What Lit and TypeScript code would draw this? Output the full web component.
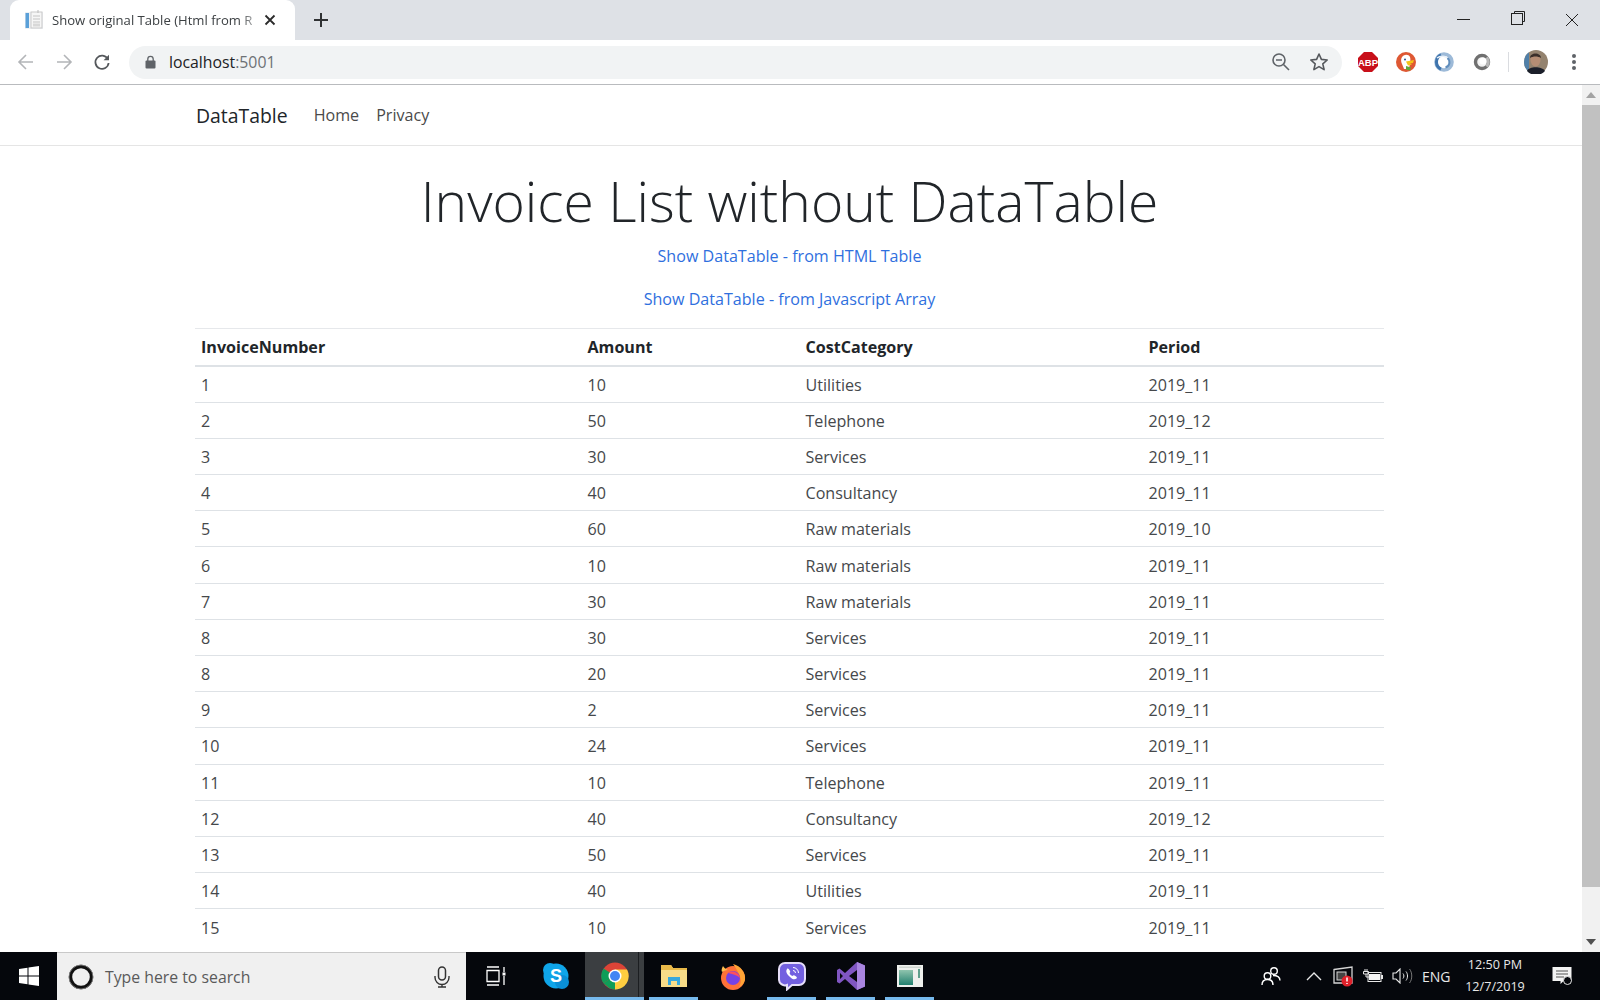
import { LitElement, html, css, svg } from "lit";
import { customElement } from "lit/decorators.js";

const rows: [string, string, string, string][] = [
  ["1", "10", "Utilities", "2019_11"],
  ["2", "50", "Telephone", "2019_12"],
  ["3", "30", "Services", "2019_11"],
  ["4", "40", "Consultancy", "2019_11"],
  ["5", "60", "Raw materials", "2019_10"],
  ["6", "10", "Raw materials", "2019_11"],
  ["7", "30", "Raw materials", "2019_11"],
  ["8", "30", "Services", "2019_11"],
  ["8", "20", "Services", "2019_11"],
  ["9", "2", "Services", "2019_11"],
  ["10", "24", "Services", "2019_11"],
  ["11", "10", "Telephone", "2019_11"],
  ["12", "40", "Consultancy", "2019_12"],
  ["13", "50", "Services", "2019_11"],
  ["14", "40", "Utilities", "2019_11"],
  ["15", "10", "Services", "2019_11"],
];

const ic = (w: number, h: number, body: unknown) =>
  html`<svg width=${w} height=${h} viewBox="0 0 ${w} ${h}" fill="none">${body}</svg>`;

@customElement("app-root")
export class AppRoot extends LitElement {
  static styles = css`
    :host { display: block; width: 1600px; height: 1000px; overflow: hidden; background: #fff;
      font-family: "Open Sans", "Noto Sans", sans-serif; color: #212529; }
    svg { display: block; flex: none; }
    .shell { display: flex; flex-direction: column; height: 1000px; }

    .tabstrip { height: 40px; background: #dee1e6; display: flex; align-items: flex-end; flex: none; }
    .tab { margin-left: 10px; width: 285px; height: 40px; background: #fff; border-radius: 9px 9px 0 0;
      display: flex; align-items: center; padding-left: 15px; box-sizing: border-box; position: relative; }
    .tab-title { margin-left: 9px; width: 208px; font-size: 13.1px; color: #3c4043; white-space: nowrap;
      -webkit-mask-image: linear-gradient(90deg, #000 90%, rgba(0,0,0,.2) 100%); mask-image: linear-gradient(90deg, #000 90%, rgba(0,0,0,.2) 100%); }
    .tab-close { margin-left: 4px; }
    .newtab { margin-left: 18px; align-self: center; }
    .winctl { margin-left: auto; display: flex; align-items: center; align-self: stretch; padding-right: 21px; gap: 40px; }

    .toolbar { height: 44px; background: #fff; border-bottom: 1px solid #b9bbbe; display: flex; align-items: center; flex: none; padding-left: 16px; }
    .navbtns { display: flex; align-items: center; gap: 18px; }
    .omni { margin-left: 17px; width: 1213px; height: 33px; border-radius: 17px; background: #f1f3f4; display: flex; align-items: center; padding: 0 13px 0 16px; box-sizing: border-box; }
    .url { margin-left: 13px; font-size: 15.8px; color: #202124; }
    .url span { color: #6d7175; }
    .omni-end { margin-left: auto; display: flex; gap: 18px; align-items: center; }
    .exts { margin-left: 16px; display: flex; align-items: center; gap: 18px; }
    .divider { width: 1px; height: 20px; background: #dadce0; margin: 0 -3px 0 -2px; }
    .menu { margin-left: 0; }

    .view { flex: 1; display: flex; min-height: 0; }
    .page { flex: 1; min-width: 0; overflow: hidden; }
    .navbar { height: 60px; border-bottom: 1px solid #e5e5e5; display: flex; align-items: center; padding-left: 196px; }
    .brand { font-size: 19.4px; color: #212529; }
    .navlinks { display: flex; gap: 17px; margin-left: 26px; font-size: 16.1px; color: #4a4a4a; }
    .main { padding-left: 195px; width: 1189px; }
    h1 { margin: 17px 0 0; height: 76px; line-height: 76px; font-size: 55.2px; font-weight: 300; text-align: center; color: #212529; white-space: nowrap; }
    .link { text-align: center; font-size: 16.1px; color: #2f6fde; height: 24px; line-height: 24px; }
    .l1 { margin-top: 5px; }
    .l2 { margin-top: 19px; }
    table { margin-top: 17px; width: 1189px; border-collapse: collapse; table-layout: fixed; font-size: 16.1px; }
    .c1 { width: 386.5px; } .c2 { width: 218px; } .c3 { width: 343px; } .c4 { width: 241.5px; }
    th { text-align: left; font-weight: 700; color: #212529; padding: 0 6px; height: 37.5px; border-top: 1px solid #e6e8eb; border-bottom: 2px solid #dee2e6; box-sizing: border-box; }
    td { padding: 1px 6px 0; height: 36.2px; color: #45484b; border-bottom: 1px solid #dee2e6; box-sizing: border-box; }
    tr:last-child td { border-bottom: none; }

    .scrollbar { width: 18px; background: #f1f1f1; display: flex; flex-direction: column; flex: none; }
    .arrow { height: 20px; display: flex; align-items: center; justify-content: center; flex: none; }
    .thumb { height: 782px; background: #c1c1c1; flex: none; }
    .track { flex: 1; }

    .taskbar { height: 48px; background: #05070c; display: flex; align-items: center; flex: none; }
    .start { width: 57px; display: flex; justify-content: center; }
    .search { width: 409px; height: 48px; background: #f0f0f0; border-top: 1px solid #c9c9c9; box-sizing: border-box; display: flex; align-items: center; padding-left: 11px; }
    .search-text { margin-left: 11px; font-size: 15.8px; color: #5a5a5a; }
    .mic { margin-left: auto; margin-right: 16px; }
    .apps { display: flex; align-items: stretch; height: 48px; }
    .app { width: 59px; display: flex; align-items: center; justify-content: center; position: relative; }
    .app.tv { width: 60px; }
    .app.active::after { content: ""; position: absolute; left: 5px; right: 5px; bottom: 0; height: 3px; background: #76b9ed; }
    .app.cur { background: #3b3e41; }
    .app.cur::after { left: 0; right: 0; }
    .app.cur::before { content: ""; position: absolute; right: 5px; top: 0; bottom: 0; width: 1px; background: #1c1e21; }
    .tray { margin-left: auto; display: flex; align-items: center; height: 48px; color: #fff; }
    .sp22 { width: 25px; } .sp13 { width: 11px; } .sp8 { width: 9px; }
    .eng { font-size: 14px; margin-left: 9px; width: 31px; color: #e8e8e8; }
    .clock { width: 78px; text-align: center; font-size: 12.6px; line-height: 22px; color: #e8e8e8; margin-left: 3px; }
    .notif { margin-left: 18px; margin-right: 27px; }
  `;

  private favicon() {
    return ic(18, 20, svg`
      <rect x="0" y="2" width="18" height="17" fill="#eef1f4"/>
      <rect x="0.5" y="3" width="3.5" height="15" fill="#5aa0d8"/>
      <rect x="6" y="2" width="11" height="16" fill="#f6f6f6" stroke="#c9c9c9"/>
      <path d="M8 6h7M8 9h7M8 12h7" stroke="#c4c4c4"/>
      <rect x="8" y="13.5" width="7" height="3" fill="#d8d8d8"/>
      <path d="M13 0v3" stroke="#bbb"/>`);
  }

  private chrome() {
    return html`
      <div class="tabstrip">
        <div class="tab">
          ${this.favicon()}
          <div class="tab-title">Show original Table (Html from R</div>
          <div class="tab-close">${ic(12, 12, svg`<path d="M1.5 1.5l9 9M10.5 1.5l-9 9" stroke="#2b2b2b" stroke-width="1.8"/>`)}</div>
        </div>
        <div class="newtab">${ic(16, 16, svg`<path d="M8 1v14M1 8h14" stroke="#2f3133" stroke-width="2"/>`)}</div>
        <div class="winctl">
          ${ic(14, 34, svg`<path d="M0 16.5h13" stroke="#222" stroke-width="1"/>`)}
          ${ic(14, 34, svg`<path d="M3.5 10.5v-2h10v10h-2" stroke="#222"/><rect x="0.5" y="10.5" width="11" height="11" stroke="#222"/>`)}
          ${ic(14, 34, svg`<path d="M1 11l12 12M13 11L1 23" stroke="#222"/>`)}
        </div>
      </div>
      <div class="toolbar">
        <div class="navbtns">
          ${ic(20, 20, svg`<path d="M17 10H3M10 3l-7 7 7 7" stroke="#b3b5b8" stroke-width="1.6"/>`)}
          ${ic(20, 20, svg`<path d="M3 10h14M10 3l7 7-7 7" stroke="#b3b5b8" stroke-width="1.6"/>`)}
          ${ic(20, 20, svg`<path d="M15.8 7A6.6 6.6 0 1 0 16.6 11" stroke="#55585c" stroke-width="1.8"/><path d="M17 2.8v5.4h-5.4z" fill="#55585c"/>`)}
        </div>
        <div class="omni">
          ${ic(11, 14, svg`<rect x="0.5" y="5.5" width="10" height="8" rx="1" fill="#5f6368"/><path d="M2.8 6V4a2.7 2.7 0 0 1 5.400 0v2" stroke="#5f6368" stroke-width="1.300"/>`)}
          <div class="url">localhost<span>:5001</span></div>
          <div class="omni-end">
            ${ic(20, 20, svg`<circle cx="8" cy="8" r="6" stroke="#5f6368" stroke-width="1.6"/><path d="M5 8h6M12.500 12.500l5.500 5.500" stroke="#5f6368" stroke-width="1.6"/>`)}
            ${ic(20, 20, svg`<path d="M10 2l2.400 5.400 5.800.6-4.400 3.900 1.300 5.700L10 14.600l-5.100 3 1.300-5.700L1.800 8l5.800-.6z" stroke="#55585c" stroke-width="1.6" stroke-linejoin="round"/>`)}
          </div>
        </div>
        <div class="exts">
          ${ic(20, 20, svg`<path d="M6 0h8l6 6v8l-6 6H6l-6-6V6z" fill="#c8101a"/><text x="10" y="13.500" text-anchor="middle" font-family="Liberation Sans" font-weight="700" font-size="9.500" fill="#fff">ABP</text>`)}
          ${ic(20, 20, svg`<circle cx="10" cy="10" r="10" fill="#de5833"/><path d="M5.500 6c2-4 7-4 8.500-1 1 3 0 6-1 12H8C7 13 4 10 5.500 6z" fill="#fff"/><path d="M10 9.500l8-1.500-1 3-3 .5 2 1-4 1z" fill="#f5c518"/><path d="M10 14l5 1.500-1 3-4-1z" fill="#5fa83a"/><circle cx="9" cy="7.500" r="1" fill="#2d4f8e"/>`)}
          ${ic(20, 20, svg`<circle cx="10" cy="10" r="8" stroke="#9dbad8" stroke-width="3.600"/><path d="M7 2.800A8 8 0 0 0 7 17.200" stroke="#3f74ad" stroke-width="3"/><path d="M3 6c4-3 10-2 12 2" stroke="#e8f0f8" stroke-width="1.500"/><path d="M13.500 6a5.500 5.500 0 0 1-2 9.500" stroke="#5f8dbc" stroke-width="2"/>`)}
          ${ic(20, 20, svg`<circle cx="10" cy="10" r="6.500" fill="#f2f2f2" stroke="#707070" stroke-width="3.400"/><path d="M14.500 5.500a6.500 6.500 0 0 1 0 9" stroke="#b8b8b8" stroke-width="3"/><circle cx="11" cy="9" r="3.500" fill="#fff"/>`)}
          <div class="divider"></div>
          ${ic(24, 24, svg`<circle cx="12" cy="12" r="12" fill="#94836f"/><path d="M0 12a12 12 0 0 0 5 9.700V2.300A12 12 0 0 0 0 12z" fill="#4f7fa8"/><ellipse cx="11.500" cy="10" rx="5" ry="6.500" fill="#b58d74"/><path d="M6 8c0-6 11-6 11 0-3-2-8-2-11 0z" fill="#3a2f2a"/><path d="M3 21c2-5 15-5 18 0a12 12 0 0 1-18 0z" fill="#1b1f2a"/>`)}
          <div class="menu">${ic(16, 20, svg`<circle cx="8" cy="4" r="2" fill="#5f6368"/><circle cx="8" cy="10" r="2" fill="#5f6368"/><circle cx="8" cy="16" r="2" fill="#5f6368"/>`)}</div>
        </div>
      </div>`;
  }

  private taskbar() {
    return html`
      <div class="taskbar">
        <div class="start">${ic(20, 20, svg`<path d="M0 3l8.500-1.200v7.600H0zM9.500 1.600L20 0v9.400H9.500zM0 10.600h8.500v7.600L0 17zM9.500 10.600H20V20L9.500 18.400z" fill="#fff"/>`)}</div>
        <div class="search">
          ${ic(26, 26, svg`<circle cx="13" cy="13" r="10.500" stroke="#111" stroke-width="3.400"/><circle cx="13" cy="13" r="12" stroke="#888" stroke-width="0.800"/>`)}
          <div class="search-text">Type here to search</div>
          <div class="mic">${ic(16, 22, svg`<rect x="4.500" y="1" width="7" height="13" rx="3.500" stroke="#333" stroke-width="1.500"/><path d="M1 10v1.500a7 7 0 0 0 14 0V10M8 18.500V21M4 21h8" stroke="#333" stroke-width="1.400"/>`)}</div>
        </div>
        <div class="apps">
          <div class="app tv">${ic(20, 22, svg`<path d="M1 2h12M1 20h12M1 5.500h12v11H1z" stroke="#fff" stroke-width="1.300"/><path d="M18 2v5M18 11v9" stroke="#fff" stroke-width="1.300"/><rect x="16.500" y="7.500" width="3" height="3" fill="#fff"/>`)}</div>
          <div class="app">${ic(28, 28, svg`<circle cx="14" cy="14" r="12.500" fill="#0fa5e9"/><circle cx="8" cy="8" r="7" fill="#0fa5e9"/><circle cx="20" cy="20" r="7" fill="#0a8fd6"/><text x="14" y="20" text-anchor="middle" font-family="Liberation Sans" font-weight="700" font-size="18" fill="#fff">S</text>`)}</div>
          <div class="app cur active">${ic(28, 28, svg`<circle cx="14" cy="14" r="13.500" fill="#db4437"/><path d="M14 14L2.300 21A13.500 13.500 0 0 1 2.600 6.500z" fill="#0f9d58"/><path d="M14 14h13.500A13.500 13.500 0 0 1 8 26.100L2.300 21z" fill="#0f9d58"/><path d="M14 7.500h12A13.500 13.500 0 0 1 14 27.500z" fill="#ffcd40"/><circle cx="14" cy="14" r="6.500" fill="#fff"/><circle cx="14" cy="14" r="5" fill="#4285f4"/>`)}</div>
          <div class="app active">${ic(28, 26, svg`<path d="M1 2h10l2 3h14v19H1z" fill="#f8dc88"/><path d="M1 2h10l2 3h14v2H1z" fill="#e9b949"/><path d="M8 22v-8h12v8h-3v-4h-6v4z" fill="#38a8dc"/>`)}</div>
          <div class="app">${ic(28, 28, svg`<circle cx="14" cy="16" r="12" fill="#ff7139"/><path d="M14 2c8 2 13 9 12 16-1 3-3 6-6 7 4-6 1-13-6-23z" fill="#ffa436"/><circle cx="14" cy="16" r="7" fill="#7542e5"/><path d="M3 10c-1-2 0-4 1-6 1 2 3 3 5 4-3 0-4 1-6 2z" fill="#ffbd4f"/><path d="M9 11c4-3 11-1 12 5-3-3-8-4-12-5z" fill="#ff4f5e"/>`)}</div>
          <div class="app active">${ic(28, 30, svg`<path d="M7 2h14a6 6 0 0 1 6 6v10a6 6 0 0 1-6 6h-7l-5 4.500V24A6 6 0 0 1 1 18V8a6 6 0 0 1 6-6z" fill="#7360e0" stroke="#e6def9" stroke-width="2"/><path d="M9 8c1-1 2 0 3 2 .500 1 0 1.500-.5 2 .5 1.500 1.500 2.500 3 3 .5-.5 1-1 2-.5 2 1 3 2 2 3-2 1.500-4 1-7-2s-4-5-2.500-7.500z" fill="#fff"/><path d="M15 6.500a5.500 5.500 0 0 1 5.500 5.500M15 9.500a2.500 2.500 0 0 1 2.500 2.500" stroke="#fff" stroke-width="1"/>`)}</div>
          <div class="app active">${ic(30, 30, svg`<path fill-rule="evenodd" d="M21 1l8 3.500v21L21 29 9 18l-5.500 4.500L1 21V9l2.500-1.500L9 12zM21 9v12l-8-6zM4 12v6l3-3z" fill="#8056c2"/><path d="M21 1l8 3.500v21L21 29z" fill="#a985e0"/>`)}</div>
          <div class="app active">${ic(26, 22, svg`<defs><linearGradient id="pane" x1="0" y1="0" x2="0" y2="1"><stop offset="0" stop-color="#8fc4ae"/><stop offset="1" stop-color="#23806f"/></linearGradient></defs><rect width="26" height="22" fill="#eef0ed"/><rect x="2" y="5" width="14" height="15" fill="url(#pane)"/><rect x="21" y="4" width="2" height="9" fill="#5f9f8c"/><rect x="2" y="1.500" width="22" height="1.500" fill="#cfd5d0"/>`)}</div>
        </div>
        <div class="tray">
          ${ic(20, 22, svg`<circle cx="13" cy="6" r="3.300" stroke="#fff" stroke-width="1.400"/><circle cx="6.500" cy="11" r="3.300" stroke="#fff" stroke-width="1.400"/><path d="M1 20c0-4 2-5.500 5.500-5.500S12 16 12 20M12 10.500c4 0 7 1 7 5" stroke="#fff" stroke-width="1.400"/>`)}
          <div class="sp22"></div>
          ${ic(16, 10, svg`<path d="M1 9l7-7 7 7" stroke="#e8e8e8" stroke-width="1.400"/>`)}
          <div class="sp13"></div>
          ${ic(21, 21, svg`<path d="M1 3.500L19 1v16H1z" stroke="#d5d5d5" stroke-width="1.300"/><rect x="4" y="6" width="9" height="8" fill="#444" stroke="#d5d5d5"/><circle cx="14" cy="15" r="5.500" fill="#e0212b"/><path d="M14 11.500v4M14 17v1" stroke="#fff" stroke-width="1.500"/>`)}
          <div class="sp8"></div>
          ${ic(20, 14, svg`<rect x="5" y="3.500" width="13" height="9" stroke="#e8e8e8"/><rect x="6" y="5" width="11" height="6" fill="#f4f4f4"/><rect x="18" y="6" width="2" height="4" fill="#e8e8e8"/><path d="M2 0v2M4 0v2M0.500 2.500h5v2.500H.5zM3 5v3h3" stroke="#e8e8e8"/>`)}
          <div class="sp8"></div>
          ${ic(21, 16, svg`<path d="M1 5h3l4-4v14l-4-4H1z" stroke="#e8e8e8" stroke-width="1.100"/><path d="M11 5.500c1.200 1.500 1.200 3.500 0 5M14 3.500c2 2.500 2 6.500 0 9" stroke="#e8e8e8"/><path d="M17.500 1c3 3.500 3 10.500 0 14" stroke="#777"/>`)}
          <div class="eng">ENG</div>
          <div class="clock">12:50 PM<br />12/7/2019</div>
          <div class="notif">${ic(21, 20, svg`<path d="M0.500 1h19v14h-8l-3 3v-3h-8z" fill="#f3f3f3"/><path d="M4 5h12M4 8h12M4 11h8" stroke="#555" stroke-width="1.200"/><circle cx="15.500" cy="14.500" r="4" fill="#05070c" stroke="#e8e8e8"/>`)}</div>
        </div>
      </div>`;
  }

  render() {
    return html`
      <div class="shell">
        ${this.chrome()}
        <div class="view">
          <div class="page">
            <nav class="navbar">
              <div class="brand">DataTable</div>
              <div class="navlinks"><span>Home</span><span>Privacy</span></div>
            </nav>
            <main class="main">
              <h1>Invoice List without DataTable</h1>
              <div class="link l1">Show DataTable - from HTML Table</div>
              <div class="link l2">Show DataTable - from Javascript Array</div>
              <table>
                <colgroup><col class="c1" /><col class="c2" /><col class="c3" /><col class="c4" /></colgroup>
                <thead><tr><th>InvoiceNumber</th><th>Amount</th><th>CostCategory</th><th>Period</th></tr></thead>
                <tbody>${rows.map((r) => html`<tr>${r.map((c) => html`<td>${c}</td>`)}</tr>`)}</tbody>
              </table>
            </main>
          </div>
          <div class="scrollbar">
            <div class="arrow">${ic(10, 6, svg`<path d="M0 6l5-6 5 6z" fill="#a3a3a3"/>`)}</div>
            <div class="thumb"></div>
            <div class="track"></div>
            <div class="arrow">${ic(10, 6, svg`<path d="M0 0l5 6 5-6z" fill="#505050"/>`)}</div>
          </div>
        </div>
        ${this.taskbar()}
      </div>`;
  }
}
